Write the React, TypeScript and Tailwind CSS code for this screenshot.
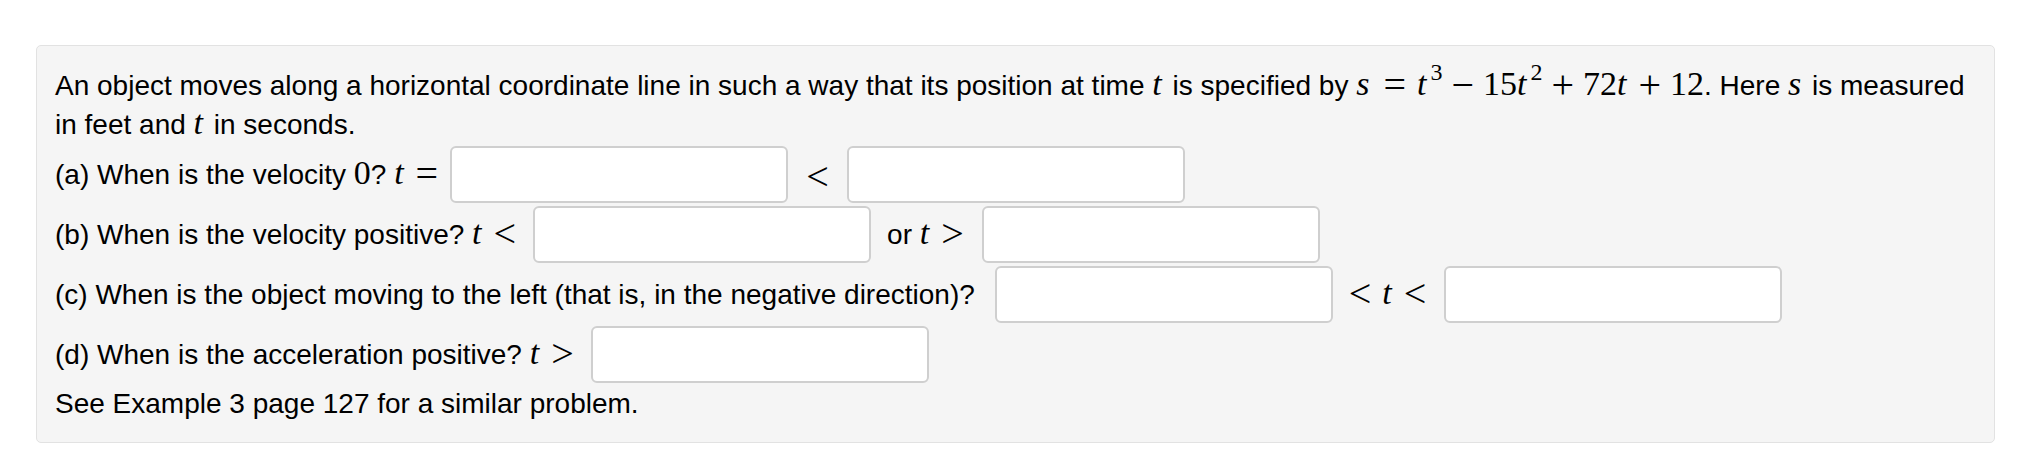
import React from "react";

const serif = "font-['Liberation_Serif',serif]";

// math glyphs are drawn in a serif face a bit larger than the prose, like MathJax does
function V({ children }: { children: React.ReactNode }) {
  return <span className={`${serif} italic text-[34px] leading-[0] pr-[3px]`}>{children}</span>;
}

function N({ children }: { children: React.ReactNode }) {
  return <span className={`${serif} text-[34px] leading-[0]`}>{children}</span>;
}

function Op({ children, className = "mx-[9px]" }: { children: React.ReactNode; className?: string }) {
  return <span className={`${serif} relative top-[3px] text-[40px] leading-[0] ${className}`}>{children}</span>;
}

function Sup({ children }: { children: React.ReactNode }) {
  return <sup className={`${serif} text-[24px] ml-[1px] -top-[15px]`}>{children}</sup>;
}

function Box() {
  return (
    <input
      type="text"
      className="w-[338px] h-[57px] shrink-0 rounded-[6px] border-2 border-[#cfcfcf] bg-white outline-none"
    />
  );
}

export default function App() {
  return (
    <div className="w-[2038px] h-[476px] bg-white pt-[45px] pl-[36px] font-['Liberation_Sans',Arial,sans-serif] text-[28px] leading-[39px] text-black">
      <div className="w-[1959px] rounded-[5px] border border-[#e2e2e2] bg-[#f5f5f5] pl-[18px] pr-[18px] pt-[20px] pb-[19px]">
        <p className="whitespace-nowrap">
          An object moves along a horizontal coordinate line in such a way that its position at time <V>t</V> is
          specified by <V>s</V>
          <Op className="mx-[11px]">=</Op>
          <V>t</V>
          <Sup>3</Sup>
          <Op>−</Op>
          <N>15</N>
          <V>t</V>
          <Sup>2</Sup>
          <Op>+</Op>
          <N>72</N>
          <V>t</V>
          <Op>+</Op>
          <N>12</N>. Here <V>s</V> is measured
        </p>
        <p className="whitespace-nowrap">
          in feet and <V>t</V> in seconds.
        </p>

        <div className="flex h-[60px] items-center whitespace-nowrap">
          <span>
            (a) When is the velocity <N>0</N>? <V>t</V>
            <Op className="ml-[9px]">=</Op>
          </span>
          <div className="ml-[12px]">
            <Box />
          </div>
          <Op className="mx-[18px]">&lt;</Op>
          <Box />
        </div>

        <div className="flex h-[60px] items-center whitespace-nowrap">
          <span>
            (b) When is the velocity positive? <V>t</V>
            <Op className="ml-[9px]">&lt;</Op>
          </span>
          <div className="ml-[17px]">
            <Box />
          </div>
          <span className="ml-[16px]">
            or <V>t</V>
            <Op className="ml-[9px]">&gt;</Op>
          </span>
          <div className="ml-[18px]">
            <Box />
          </div>
        </div>

        <div className="flex h-[60px] items-center whitespace-nowrap">
          <span>(c) When is the object moving to the left (that is, in the negative direction)?</span>
          <div className="ml-[20px]">
            <Box />
          </div>
          <span className="ml-[16px] mr-[18px]">
            <Op className="mr-[11px]">&lt;</Op>
            <V>t</V>
            <Op className="ml-[9px]">&lt;</Op>
          </span>
          <Box />
        </div>

        <div className="flex h-[60px] items-center whitespace-nowrap">
          <span>
            (d) When is the acceleration positive? <V>t</V>
            <Op className="ml-[9px]">&gt;</Op>
          </span>
          <div className="ml-[17px]">
            <Box />
          </div>
        </div>

        <p>See Example 3 page 127 for a similar problem.</p>
      </div>
    </div>
  );
}
